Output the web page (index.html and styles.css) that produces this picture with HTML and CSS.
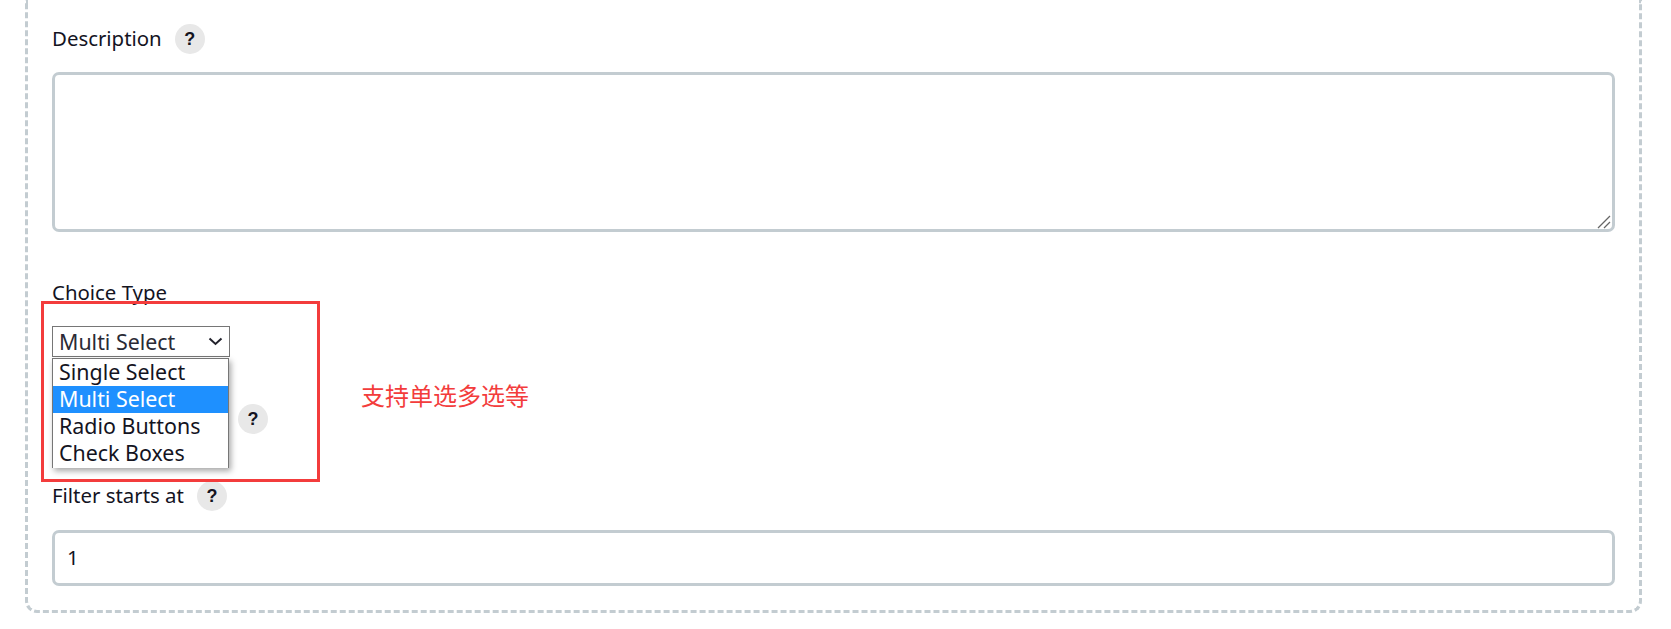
FILE: index.html
```html
<!DOCTYPE html>
<html lang="en">
<head>
	<meta charset="UTF-8">
	<title>Choice Parameter</title>
	<link rel="stylesheet" href="styles.css">
</head>
<body>
	<section class="panel">
		<div class="label-row">
			<span class="label">Description</span>
			<span class="help">?</span>
		</div>
		<div class="area-wrap">
			<textarea class="text-box area"></textarea>
			<svg class="grip" width="14" height="14" viewBox="0 0 14 14">
				<path d="M1 13 L13 1 M7 13 L13 7" fill="none" stroke="#666" stroke-width="1.3"/>
			</svg>
		</div>

		<div class="label-row choice-row">
			<span class="label">Choice Type</span>
		</div>
		<div class="select-wrap">
			<select class="choice-select">
				<option>Single Select</option>
				<option selected>Multi Select</option>
				<option>Radio Buttons</option>
				<option>Check Boxes</option>
			</select>
			<svg class="chevron" width="15" height="9" viewBox="0 0 15 9">
				<path d="M1.5 1.5 L7.5 7 L13.5 1.5" fill="none" stroke="#22222c" stroke-width="2"/>
			</svg>
			<ul class="choice-list">
				<li>Single Select</li>
				<li class="active">Multi Select</li>
				<li>Radio Buttons</li>
				<li>Check Boxes</li>
			</ul>
		</div>

		<div class="label-row covered-row">
			<span class="help">?</span>
		</div>

		<div class="label-row filter-row">
			<span class="label">Filter starts at</span>
			<span class="help">?</span>
		</div>
		<input class="text-box line" type="text" value="1">

		<div class="mark"></div>
		<div class="note">支持单选多选等</div>
	</section>
</body>
</html>
```

FILE: styles.css
```css
body {
	margin: 0;
	background-color: #fff;
	color: #14141f;
	font-family: "Noto Sans", "Open Sans", sans-serif;
}
.panel {
	position: relative;
	margin: 0 29px 0 25px;
	padding: 24px 24px 24px 24px;
	border: 3px dashed #c3ccd1;
	border-top: none;
	border-radius: 0 0 12px 12px;
}
.label-row {
	display: flex;
	align-items: center;
	height: 30px;
}
.label {
	padding-bottom: 2px;
	font-size: 20.4px;
}
.help {
	display: block;
	width: 30px;
	height: 30px;
	margin-left: 13px;
	border-radius: 50%;
	background-color: #e8e8e8;
	font-family: "Liberation Sans", sans-serif;
	font-size: 18px;
	font-weight: bold;
	line-height: 30px;
	text-align: center;
}
.text-box {
	display: block;
	box-sizing: border-box;
	width: 100%;
	border: 3px solid #c3ccd1;
	border-radius: 7px;
	outline: none;
	background-color: #fff;
	color: #14141f;
	font-family: "Noto Sans", "Open Sans", sans-serif;
	font-size: 20.4px;
}
.area-wrap {
	position: relative;
	margin-top: 18px;
}
.area {
	height: 160px;
	resize: none;
}
.grip {
	position: absolute;
	right: 4px;
	bottom: 3px;
}
.line {
	height: 56px;
	margin-top: 19px;
	padding: 0 12px 2px;
}
.choice-row {
	margin-top: 45px;
}
.choice-row .label {
	padding-bottom: 0;
}
.select-wrap {
	position: relative;
	margin-top: 19px;
}
.choice-select {
	display: block;
	box-sizing: border-box;
	width: 178px;
	height: 31px;
	padding: 0 0 0 6px;
	border: 1px solid #767676;
	border-radius: 0;
	outline: none;
	background-color: #fff;
	color: #2a2a35;
	font-family: "Noto Sans", "Open Sans", sans-serif;
	font-size: 21.4px;
	-webkit-appearance: none;
	appearance: none;
}
.chevron {
	position: absolute;
	top: 11px;
	left: 156px;
}
.choice-list {
	position: absolute;
	top: 32px;
	left: 0;
	z-index: 2;
	box-sizing: border-box;
	width: 177px;
	height: 110px;
	margin: 0;
	padding: 0;
	border: 1px solid #767676;
	border-bottom: none;
	background-color: #fff;
	box-shadow: 2px 3px 6px rgba(0,0,0,.35);
	list-style: none;
	font-size: 21.4px;
}
.choice-list li {
	height: 27px;
	padding-left: 6px;
	line-height: 25px;
}
.choice-list li.active {
	background-color: #1e90ff;
	color: #fff;
}
.covered-row {
	margin-top: 47px;
	padding-left: 173px;
}
.filter-row {
	margin-top: 47px;
}
.mark {
	position: absolute;
	top: 301px;
	left: 13px;
	z-index: 3;
	box-sizing: border-box;
	width: 279px;
	height: 181px;
	border: 3px solid #f33c3c;
}
.note {
	position: absolute;
	top: 377px;
	left: 333px;
	color: #f33c3c;
	font-family: "Noto Sans CJK SC", sans-serif;
	font-size: 24px;
	line-height: 36px;
	white-space: nowrap;
}
```
